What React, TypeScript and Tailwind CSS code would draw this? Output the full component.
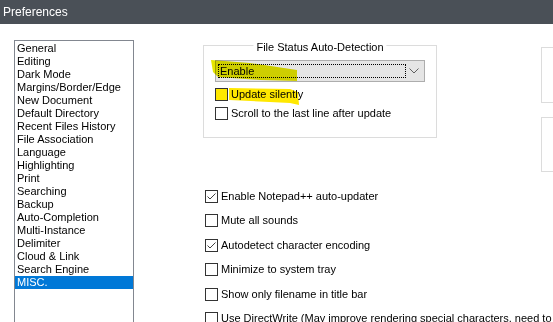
import React from "react";

const items = [
  "General",
  "Editing",
  "Dark Mode",
  "Margins/Border/Edge",
  "New Document",
  "Default Directory",
  "Recent Files History",
  "File Association",
  "Language",
  "Highlighting",
  "Print",
  "Searching",
  "Backup",
  "Auto-Completion",
  "Multi-Instance",
  "Delimiter",
  "Cloud & Link",
  "Search Engine",
  "MISC.",
];

const lower: [string, boolean][] = [
  ["Enable Notepad++ auto-updater", true],
  ["Mute all sounds", false],
  ["Autodetect character encoding", true],
  ["Minimize to system tray", false],
  ["Show only filename in title bar", false],
  ["Use DirectWrite (May improve rendering special characters, need to restart Notepad++)", false],
];

function Box({ checked }: { checked?: boolean }) {
  return (
    <div className="w-[13px] h-[13px] shrink-0 border border-[#333333] bg-white relative">
      {checked && (
        <svg width="11" height="11" viewBox="0 0 11 11" className="absolute left-0 top-0">
          <polyline points="1.5,5.5 4,8 9.5,2.5" fill="none" stroke="#404040" strokeWidth="1" />
        </svg>
      )}
    </div>
  );
}

function Check({ label, checked }: { label: string; checked?: boolean }) {
  return (
    <div className="flex items-center h-[13px] whitespace-nowrap">
      <Box checked={checked} />
      <span className="ml-[3px] leading-[13px]">{label}</span>
    </div>
  );
}

export default function App() {
  return (
    <div className="relative w-[553px] h-[322px] overflow-hidden bg-white text-[11px] text-black font-['Liberation_Sans',Arial,sans-serif]">
      <div className="h-[24px] bg-[#4a5057] text-white text-[12px] pl-[3px] flex items-center">
        Preferences
      </div>
      <div className="flex">
        <div className="ml-[14px] mt-[16px] w-[120px] h-[300px] shrink-0 border border-[#828790] pt-[1px]">
          {items.map((it) => (
            <div
              key={it}
              className={
                it === "MISC."
                  ? "h-[13px] leading-[13px] pl-[2px] bg-[#0078d7] text-white whitespace-nowrap"
                  : "h-[13px] leading-[13px] pl-[2px] whitespace-nowrap"
              }
            >
              {it}
            </div>
          ))}
        </div>
        <div className="ml-[69px] mt-[21px] flex flex-col">
          <div className="flex h-[93px]">
            <div className="relative w-[234px] h-[93px] shrink-0 border border-[#dcdcdc] pt-[14px] pl-[11px]">
              <span className="absolute top-[-5px] left-1/2 -translate-x-1/2 bg-white px-[3px] leading-[13px] whitespace-nowrap">
                File Status Auto-Detection
              </span>
              <div className="relative w-[210px] h-[22px] border border-[#adadad] bg-[#e5e5e5] flex items-center">
                <div className="ml-[2px] w-[188px] h-[14px] border border-dotted border-black flex items-center">
                  <span className="pl-[1px] leading-[13px]">Enable</span>
                </div>
                <svg width="10" height="6" viewBox="0 0 10 6" className="ml-[3px]">
                  <polyline points="0.5,0.5 5,5 9.5,0.5" fill="none" stroke="#606060" strokeWidth="1" />
                </svg>
              </div>
              <div className="mt-[6px] flex flex-col gap-[6px]">
                <Check label="Update silently" />
                <Check label="Scroll to the last line after update" />
              </div>
            </div>
            <div className="ml-[104px] mt-[2px] flex flex-col gap-[14px] shrink-0">
              <div className="w-[40px] h-[56px] shrink-0 border border-[#dcdcdc]" />
              <div className="w-[40px] h-[55px] shrink-0 border border-[#dcdcdc]" />
            </div>
          </div>
          <div className="ml-[2px] mt-[52px] flex flex-col gap-[11.4px]">
            {lower.map(([l, c]) => (
              <Check key={l} label={l} checked={c} />
            ))}
          </div>
        </div>
      </div>
      <svg
        className="absolute inset-0 pointer-events-none mix-blend-multiply"
        width="553"
        height="322"
        viewBox="0 0 553 322"
      >
        <polygon
          points="211,60 250,63 297,70 297,81 260,80 218,77 213,72"
          fill="#e6e600"
        />
        <rect x="216" y="89" width="11" height="11" fill="#ffe800" />
        <polygon
          points="229,88 290,89 298,92 299,105 290,103 229,100"
          fill="#ffe800"
        />
      </svg>
    </div>
  );
}
